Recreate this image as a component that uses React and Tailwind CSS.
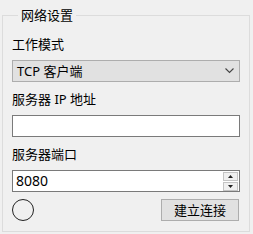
import React from 'react';

const font = { fontFamily: '"Noto Sans", "Noto Sans CJK SC", sans-serif' };

const App = () => {
    return (
        <div className="w-[253px] h-[234px] bg-[#f0f0f0] text-[13px] leading-[18px] text-black overflow-hidden" style={font}>
            <fieldset className="ml-[2px] mt-[6px] w-[248px] h-[226px] border border-[#dcdcdc] px-[9px] flex flex-col">
                <legend className="ml-[6px] px-[3px] leading-[18px]">网络设置</legend>

                {/* 工作模式 */}
                <div className="mt-[11px] mb-[7px]">工作模式</div>
                <div className="h-[22px] border border-[#adadad] bg-[#e1e1e1] flex items-center justify-between pl-[4px] pr-[5px]">
                    <span>TCP 客户端</span>
                    <svg width="9" height="6" viewBox="0 0 9 6">
                        <polyline points="0.5,0.5 4.5,4.5 8.5,0.5" fill="none" stroke="#444" strokeWidth="1.1" />
                    </svg>
                </div>

                {/* IP 地址 */}
                <div className="mt-[8px] mb-[7px]">服务器 IP 地址</div>
                <div className="h-[22px] border border-[#7a7a7a] bg-white"></div>

                {/* 端口 */}
                <div className="mt-[8px] mb-[7px]">服务器端口</div>
                <div className="h-[22px] border border-[#7a7a7a] bg-white flex items-center justify-between pl-[3px] pr-[1px]">
                    <span className="text-[14px]">8080</span>
                    <div className="flex flex-col gap-[1px]">
                        <div className="w-[15px] h-[9px] bg-[#f0f0f0] border border-[#c4c4c4] flex items-center justify-center">
                            <svg width="5" height="3" viewBox="0 0 5 3"><polygon points="2.5,0 5,3 0,3" fill="#222" /></svg>
                        </div>
                        <div className="w-[15px] h-[9px] bg-[#f0f0f0] border border-[#c4c4c4] flex items-center justify-center">
                            <svg width="5" height="3" viewBox="0 0 5 3"><polygon points="0,0 5,0 2.5,3" fill="#222" /></svg>
                        </div>
                    </div>
                </div>

                {/* 状态 + 按钮 */}
                <div className="mt-[7px] flex items-center justify-between">
                    <div className="w-[22px] h-[22px] rounded-full border border-[#222]"></div>
                    <button className="w-[78px] h-[22px] border border-[#adadad] bg-[#e1e1e1] mr-[1px]">建立连接</button>
                </div>
            </fieldset>
        </div>
    );
};

export default App;
